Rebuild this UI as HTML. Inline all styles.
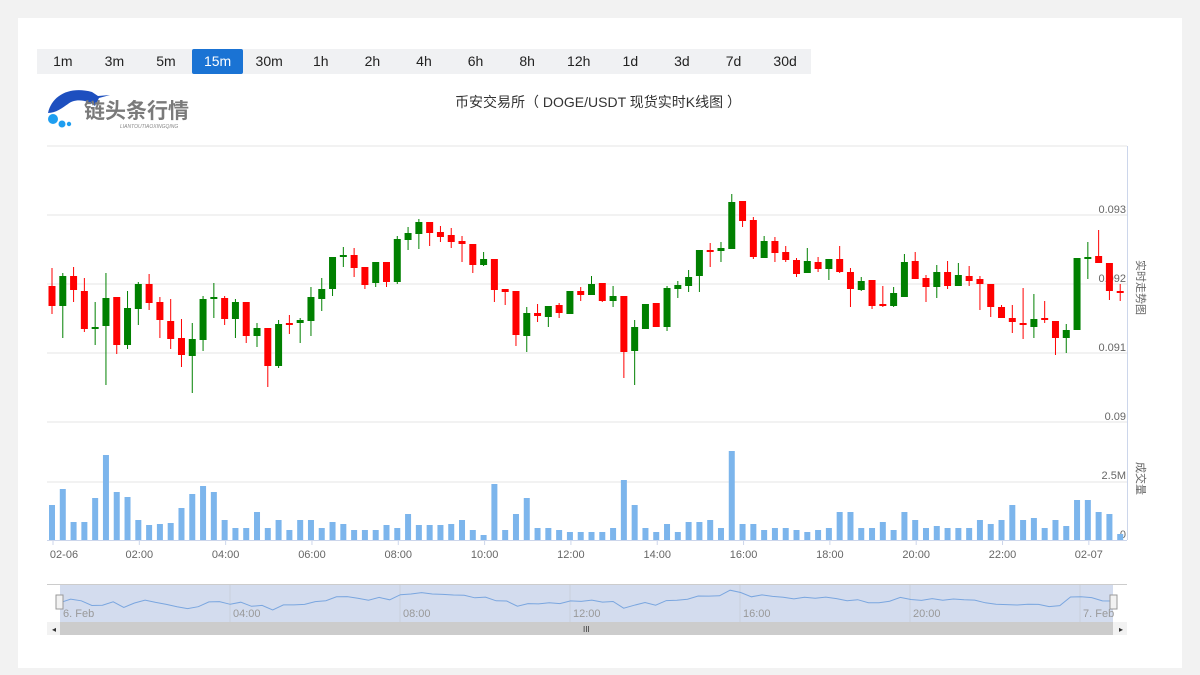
<!DOCTYPE html>
<html><head><meta charset="utf-8">
<style>
html,body{margin:0;padding:0;background:#f2f2f2;width:1200px;height:675px;overflow:hidden;font-family:"Liberation Sans","Noto Sans CJK SC",sans-serif}
.card{position:absolute;left:18px;top:18px;width:1164px;height:650px;background:#fff}
.tabs{position:absolute;left:37px;top:49px;height:25px;width:774px;background:#f0f1f3;display:flex}
.tabs div{width:51.6px;text-align:center;line-height:25px;font-size:14px;color:#222}
.tabs .on{background:#1a73d4;color:#fff;border-radius:2px}
svg{position:absolute;left:0;top:0}
</style></head><body>
<div class="card"></div>
<div class="tabs"><div>1m</div><div>3m</div><div>5m</div><div class="on">15m</div><div>30m</div><div>1h</div><div>2h</div><div>4h</div><div>6h</div><div>8h</div><div>12h</div><div>1d</div><div>3d</div><div>7d</div><div>30d</div></div>
<svg id="s" width="1200" height="675" xmlns="http://www.w3.org/2000/svg">
<path d="M48 113 C52 95 70 86 92 92 L98 96 L110 95 L99 98 L95 106 C88 100 75 98 68 104 C62 108 56 113 48 113Z" fill="#1d4fbf"/>
<circle cx="53" cy="119" r="5" fill="#1e9ef0"/><circle cx="62" cy="124" r="3.5" fill="#1e9ef0"/><circle cx="69" cy="124" r="2.2" fill="#1e9ef0"/>
<text x="84" y="118" font-size="21" font-weight="bold" fill="#7a7a7a" font-family="Liberation Sans,Noto Sans CJK SC,sans-serif">链头条行情</text>
<text x="120" y="128" font-size="5" fill="#888" font-style="italic">LIANTOUTIAOXINGQING</text>
<text x="598" y="107" font-size="14" fill="#333" text-anchor="middle" font-family="Liberation Sans,Noto Sans CJK SC,sans-serif">币安交易所（ DOGE/USDT 现货实时K线图 ）</text>
<g stroke="#e6e6e6" stroke-width="1">
<line x1="47" y1="146" x2="1127" y2="146"/><line x1="47" y1="215" x2="1127" y2="215"/><line x1="47" y1="284" x2="1127" y2="284"/><line x1="47" y1="353" x2="1127" y2="353"/><line x1="47" y1="422" x2="1127" y2="422"/><line x1="47" y1="482" x2="1127" y2="482"/>
</g>
<line x1="1127.5" y1="146" x2="1127.5" y2="540" stroke="#ccd6eb"/>
<line x1="47" y1="540.5" x2="1127" y2="540.5" stroke="#ccd6eb"/>
<g font-size="11" fill="#666" text-anchor="end">
<text x="1126" y="213">0.093</text><text x="1126" y="282">0.092</text><text x="1126" y="351">0.091</text><text x="1126" y="420">0.09</text><text x="1126" y="479">2.5M</text><text x="1126" y="538">0</text>
</g>
<g font-size="11" fill="#666" font-family="Liberation Sans,Noto Sans CJK SC,sans-serif">
<text transform="translate(1137,260) rotate(90)">实时走势图</text>
<text transform="translate(1137,462) rotate(90)">成交量</text>
</g>
<g id="c"></g>
<g font-size="11" fill="#666" text-anchor="middle" id="xl"></g>
<line x1="47" y1="584.5" x2="1127" y2="584.5" stroke="#ccc"/>
<rect x="60" y="585" width="1053" height="37" fill="#d3dcee"/>
<g stroke="#c8cfdc"><line x1="230" y1="585" x2="230" y2="622"/><line x1="400" y1="585" x2="400" y2="622"/><line x1="570" y1="585" x2="570" y2="622"/><line x1="740" y1="585" x2="740" y2="622"/><line x1="910" y1="585" x2="910" y2="622"/><line x1="1080" y1="585" x2="1080" y2="622"/></g>
<path id="nav" fill="none" stroke="#7aa6df" stroke-width="1"/>
<g font-size="11" fill="#999"><text x="63" y="617">6. Feb</text><text x="233" y="617">04:00</text><text x="403" y="617">08:00</text><text x="573" y="617">12:00</text><text x="743" y="617">16:00</text><text x="913" y="617">20:00</text><text x="1083" y="617">7. Feb</text></g>
<rect x="56" y="595" width="7" height="14" fill="#f2f2f2" stroke="#999"/><rect x="1110" y="595" width="7" height="14" fill="#f2f2f2" stroke="#999"/>
<rect x="47" y="622" width="1080" height="13" fill="#f2f2f2"/>
<rect x="60" y="622" width="1053" height="13" fill="#ccc"/>
<text x="52" y="632" font-size="8" fill="#333">◂</text><text x="1119" y="632" font-size="8" fill="#333">▸</text>
<text x="583" y="632" font-size="8" fill="#333">III</text>
</svg>
<script>
// [top, bottom, high, low, green?]
var K=[[286,306,268,314,0],[276,306,273,338,1],[276,290,267,302,0],[291,329,278,332,0],[327,329,302,345,1],[298,326,273,385,1],[297,345,297,354,0],[308,345,291,349,1],[284,309,282,325,1],[284,303,274,310,0],
[302,320,297,338,0],[321,339,299,349,0],[338,355,319,367,0],[339,356,323,393,1],[299,340,296,351,1],[297,299,283,318,1],[298,319,296,325,0],[302,319,299,338,1],[302,336,302,343,0],[328,336,323,347,1],
[328,366,328,387,0],[324,366,320,368,1],[323,324,315,334,0],[320,323,318,343,1],[297,321,287,336,1],[289,299,278,311,1],[257,289,257,296,1],[255,256,247,267,1],[255,268,248,277,0],[267,285,267,289,0],
[262,283,262,287,1],[262,282,262,287,0],[239,282,236,284,1],[233,240,227,250,1],[222,234,219,249,1],[222,233,222,246,0],[232,237,226,242,0],[235,242,228,248,0],[241,244,236,262,0],[244,265,244,273,0],
[259,265,252,266,1],[259,290,259,302,0],[289,292,289,305,0],[291,335,291,346,0],[313,336,307,352,1],[313,316,304,322,0],[306,317,306,327,1],[305,313,303,318,0],[291,314,291,314,1],[291,295,287,301,0],
[284,295,276,295,1],[283,301,283,302,0],[296,301,286,307,1],[296,352,296,378,0],[327,351,320,385,1],[304,329,304,329,1],[303,327,303,327,0],[288,327,286,331,1],[285,289,281,298,1],[277,286,270,292,1],
[250,276,250,292,1],[250,251,243,267,0],[248,251,242,262,1],[202,249,194,249,1],[201,221,201,227,0],[220,257,217,259,0],[241,258,236,258,1],[241,253,237,262,0],[252,260,246,262,0],[260,274,258,277,0],
[261,273,248,273,1],[262,269,257,272,0],[259,269,259,280,1],[259,272,246,273,0],[272,289,268,307,0],[281,290,277,291,1],[280,306,280,309,0],[304,306,286,307,0],[293,306,287,307,1],[262,297,254,297,1],
[261,279,252,279,0],[278,287,275,302,0],[272,287,265,298,1],[272,286,261,289,0],[275,286,263,286,1],[276,281,266,286,0],[279,284,276,310,0],[284,307,284,317,0],[307,318,305,318,0],[318,322,305,333,0],
[323,325,288,339,0],[319,327,294,338,1],[318,320,301,323,0],[321,338,321,355,0],[330,338,324,353,1],[258,330,258,330,1],[257,259,242,279,1],[256,263,230,263,0],[263,291,263,300,0],[291,292,284,301,0]];
var V=[505,489,522,522,498,455,492,497,520,525,524,523,508,494,486,492,520,528,528,512,528,520,530,520,520,528,522,524,530,530,530,525,528,514,525,525,525,524,520,530,535,484,530,514,498,528,528,530,532,532,532,532,528,480,505,528,532,524,532,522,522,520,528,451,524,524,530,528,528,530,532,530,528,512,512,528,528,522,530,512,520,528,526,528,528,528,520,524,520,505,520,518,528,520,526,500,500,512,514,534];
var s='',ox=52,dx=10.79;
for(var i=0;i<K.length;i++){var k=K[i],x=ox+i*dx,col=k[4]?'#008000':'#ff0000',t=k[0],b=k[1];if(b-t<2)b=t+2;
s+='<line x1="'+x+'" y1="'+k[2]+'" x2="'+x+'" y2="'+k[3]+'" stroke="'+col+'"/>';
s+='<rect x="'+(x-3.5)+'" y="'+t+'" width="7" height="'+(b-t)+'" fill="'+col+'"/>';
s+='<rect x="'+(x-3)+'" y="'+V[i]+'" width="6" height="'+(540-V[i])+'" fill="#7cb5ec"/>';}
document.getElementById('c').innerHTML=s;
var lb=['02-06','02:00','04:00','06:00','08:00','10:00','12:00','14:00','16:00','18:00','20:00','22:00','02-07'],h='';
for(var j=0;j<13;j++){var x=ox+1+j*8*dx;h+='<text x="'+(j==0?64:x)+'" y="558">'+lb[j]+'</text><line x1="'+x+'" y1="540" x2="'+x+'" y2="545" stroke="#ccd6eb"/>';}
document.getElementById('xl').innerHTML=h;
var d='';for(var i=0;i<K.length;i++){var x=60+i*1053/(K.length-1),cl=K[i][4]?K[i][0]:K[i][1],y=590+(cl-200)*0.12;d+=(i?'L':'M')+x.toFixed(1)+' '+y.toFixed(1);}
document.getElementById('nav').setAttribute('d',d);
</script>
</body></html>
